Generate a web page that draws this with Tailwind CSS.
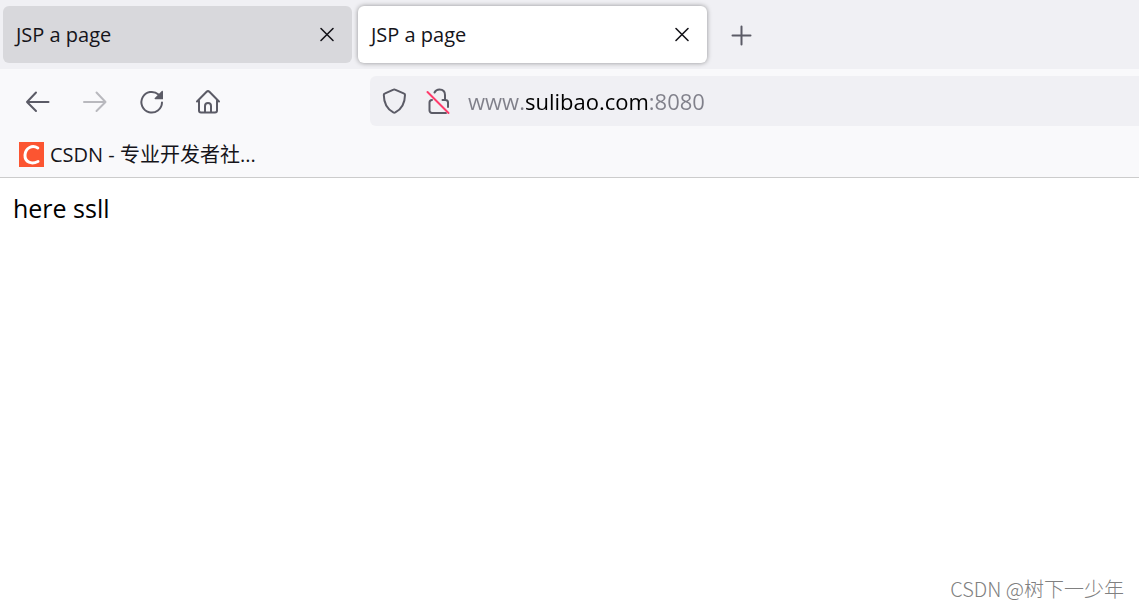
<!DOCTYPE html>
<html lang="zh-CN">

<head>
    <meta charset="UTF-8">
    <meta name="viewport" content="width=device-width, initial-scale=1.0">
    <title>JSP a page</title>
    <script src="https://cdn.jsdelivr.net/npm/@tailwindcss/browser@4"></script>
</head>

<body class="flex min-h-screen flex-col bg-white font-['Open_Sans','Noto_Sans_CJK_SC',sans-serif] text-[#15141a]">
    <!-- TABS -->
    <header class="bg-[#f9f9fb]">
        <div class="flex items-center gap-1.5 bg-[#f0f0f4] px-[3px] py-1.5">
            <div class="flex h-[57px] w-[349px] items-center justify-between rounded-md bg-[#d8d8dc] pr-4 pl-[13px]">
                <button type="button" class="text-xl leading-7">JSP a page</button>
                <button type="button" aria-label="Close tab">
                    <svg class="size-[18px]" viewBox="0 0 18 18" fill="none" stroke="currentColor" stroke-width="1.6"
                        stroke-linecap="round">
                        <path d="M3 2.5l12 12M15 2.5l-12 12" />
                    </svg>
                </button>
            </div>
            <div
                class="flex h-[57px] w-[349px] items-center justify-between rounded-md bg-white pr-4 pl-[13px] shadow-[0_0_5px_rgba(0,0,0,0.4)]">
                <button type="button" class="text-xl leading-7">JSP a page</button>
                <button type="button" aria-label="Close tab">
                    <svg class="size-[18px]" viewBox="0 0 18 18" fill="none" stroke="currentColor" stroke-width="1.6"
                        stroke-linecap="round">
                        <path d="M3 2.5l12 12M15 2.5l-12 12" />
                    </svg>
                </button>
            </div>
            <button type="button" class="ml-4 text-[#5b5b66]" aria-label="New tab">
                <svg class="size-6" viewBox="0 0 24 24" fill="none" stroke="currentColor" stroke-width="2"
                    stroke-linecap="round">
                    <path d="M3.5 12.5h18M12.5 3.5v18" />
                </svg>
            </button>
        </div>

        <!-- NAVIGATION -->
        <nav class="flex items-center pt-[7px] text-[#5b5b66]">
            <div class="flex w-[370px] shrink-0 items-center gap-[29px] pl-6">
                <button type="button" aria-label="Back">
                    <svg class="size-7" viewBox="0 0 28 28" fill="none" stroke="currentColor" stroke-width="2"
                        stroke-linecap="round" stroke-linejoin="round">
                        <path d="M24.5 15H3M12 5.5L3 15l9 9" />
                    </svg>
                </button>
                <button type="button" class="text-[#b9b9be]" aria-label="Forward" disabled>
                    <svg class="size-7" viewBox="0 0 28 28" fill="none" stroke="currentColor" stroke-width="2"
                        stroke-linecap="round" stroke-linejoin="round">
                        <path d="M3 15H24.5M15.5 5.5L24.5 15l-9 9" />
                    </svg>
                </button>
                <button type="button" aria-label="Reload">
                    <svg class="size-7" viewBox="0 0 28 28" fill="none" stroke="currentColor" stroke-width="2"
                        stroke-linecap="round">
                        <path d="M24 15.5A10.3 10.3 0 1 1 20.5 7.5" />
                        <path d="M25 4.5v7.7h-7.7c-.8 0-1-.7-.5-1.200l7-7c.5-.5 1.200-.2 1.200.5z" fill="currentColor"
                            stroke="none" />
                    </svg>
                </button>
                <button type="button" aria-label="Home">
                    <svg class="size-7" viewBox="0 0 28 28" fill="none" stroke="currentColor" stroke-width="2"
                        stroke-linecap="round" stroke-linejoin="round">
                        <path
                            d="M2 14.5L11.6 4.8q1.4-1.4 2.8 0L24 14.5M4 13.5V23.5a2 2 0 0 0 2 2h14a2 2 0 0 0 2-2v-10" />
                        <path d="M10 25v-6a3 3 0 0 1 6 0v6" />
                    </svg>
                </button>
            </div>
            <div class="flex h-[50px] grow items-center gap-4 rounded-l-md bg-[#f0f0f4] pl-2.5">
                <button type="button" aria-label="Tracking protection">
                    <svg class="size-7" viewBox="0 0 28 28" fill="none" stroke="currentColor" stroke-width="2"
                        stroke-linejoin="round">
                        <path
                            d="M13.5 2.700c.6-.3 1-.3 1.500 0l9.200 4c.5.200.8.600.8 1.200-.1 9-3.800 14.300-9.700 17.500q-1 .5-2 0C7.500 22.200 3.900 16.900 3.800 7.900c0-.6.3-1 .8-1.200z" />
                    </svg>
                </button>
                <button type="button" aria-label="Connection is not secure">
                    <svg class="size-7" viewBox="0 0 28 28" fill="none" stroke="currentColor" stroke-width="2"
                        stroke-linecap="round">
                        <path
                            d="M10.5 5.5Q12 2.500 15.500 2.500q5.500 0 5.500 5.500V12.500M18.500 13H21.500a2.500 2.500 0 0 1 2.500 2.500V20M8 13q-2.500 0-2.500 2.500V23.500a2.500 2.500 0 0 0 2.500 2.500h14" />
                        <path d="M3.5 5l21 21" stroke="#ff3b6b" />
                    </svg>
                </button>
                <input type="text" value="www.sulibao.com:8080" aria-label="Address"
                    class="w-full grow bg-[linear-gradient(to_right,#80808a_56px,#000000_56px,#000000_181px,#80808a_181px)] bg-clip-text text-[22px] leading-8 text-transparent caret-black outline-none">
            </div>
        </nav>

        <!-- BOOKMARKS -->
        <div class="flex h-[52px] items-center border-b border-[#cccccc] px-[19px] pt-1.5">
            <a href="#" class="flex items-center gap-1.5 text-xl leading-7">
                <svg class="size-[25px]" viewBox="0 0 25 25" fill="none">
                    <path d="M0 0h25v25H0z" fill="#fc5531" />
                    <path d="M18.800 6C13.500 2.800 6.500 5.500 6 13c-.3 7.500 6.500 9.500 13 6.500" stroke="#fff"
                        stroke-width="3" stroke-linecap="round" />
                </svg>
                CSDN - 专业开发者社...
            </a>
        </div>
    </header>

    <main class="px-[13px] py-3">
        <p class="text-[25px] leading-9 text-black">here ssll</p>
    </main>

    <footer
        class="mt-auto px-[15px] pb-1 text-right font-['Noto_Sans_CJK_SC',sans-serif] text-xl leading-8 font-light text-[#808080]">
        CSDN @树下一少年
    </footer>
</body>

</html>
